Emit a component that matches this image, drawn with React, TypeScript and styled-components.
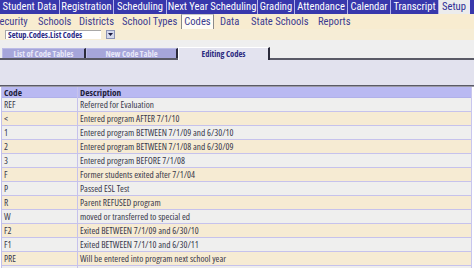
import React from "react";
import styled, { createGlobalStyle } from "styled-components";

const GlobalStyle = createGlobalStyle`
  html, body { margin: 0; padding: 0; background: #ffffff; overflow: hidden; }
  * { box-sizing: border-box; }
`;

const navFont = `"Roboto", "Liberation Sans", Arial, sans-serif`;
const smallFont = `"Open Sans", "DejaVu Sans", Verdana, sans-serif`;

const Page = styled.div`
  width: 474px;
  height: 268px;
  overflow: hidden;
  background: #ffffff;
`;

const NavBar = styled.div`
  display: flex;
  height: 14px;
  background: #3838ac;
  font-family: ${navFont};
  font-stretch: 75%;
  font-size: 10.6px;
  line-height: 14px;
`;

const NavItem = styled.div<{ $active?: boolean; $w: number }>`
  flex: 0 0 ${(p) => p.$w}px;
  text-align: center;
  white-space: nowrap;
  color: ${(p) => (p.$active ? "#2d2d96" : "#ffffff")};
  background: ${(p) => (p.$active ? "#ececec" : "transparent")};
  border-right: 1px solid ${(p) => (p.$active ? "#e8e8ff" : "#b4b4ec")};
`;

const SubNav = styled.div`
  display: flex;
  align-items: stretch;
  height: 15px;
  background: #f8ecd0;
  margin-left: -6px;
  font-family: ${navFont};
  font-stretch: 75%;
  font-size: 10.6px;
  line-height: 15px;
`;

const SubItem = styled.div<{ $active?: boolean; $w: number }>`
  flex: 0 0 ${(p) => p.$w}px;
  white-space: nowrap;
  color: #3c3c90;
  text-align: ${(p) => (p.$active ? "center" : "left")};
  margin-right: ${(p) => (p.$active ? "6px" : "0")};
  background: ${(p) => (p.$active ? "#fffcf4" : "transparent")};
  border-left: ${(p) => (p.$active ? "1px solid #8a8a8a" : "none")};
  border-right: ${(p) => (p.$active ? "1px solid #8a8a8a" : "none")};
  border-top: ${(p) => (p.$active ? "1px solid #c8c8c8" : "none")};
  line-height: ${(p) => (p.$active ? "14px" : "15px")};
`;

const CrumbRow = styled.div`
  display: flex;
  align-items: center;
  height: 11px;
  background: #f6edd6;
  padding-left: 5px;
  gap: 5px;
`;

const CrumbBox = styled.div`
  width: 96px;
  height: 9px;
  background: #ffffff;
  border-top: 1px solid #a8a8a8;
  border-left: 1px solid #a8a8a8;
  padding-left: 2px;
  font-family: ${smallFont};
  font-stretch: 75%;
  font-weight: bold;
  font-size: 8.4px;
  line-height: 8px;
  color: #2b2b86;
  white-space: nowrap;
`;

const DropButton = styled.div`
  width: 9px;
  height: 9px;
  background: #d4d8ec;
  border: 1px solid #8c94b6;
  display: flex;
  align-items: center;
  justify-content: center;
`;

const Spacer = styled.div`
  height: 8px;
  background: #efefef;
`;

const TabBar = styled.div`
  display: flex;
  align-items: flex-end;
  height: 12px;
  background: #efefef;
  padding-left: 2px;
  border-bottom: 2px solid #5a5a66;
`;

const Tab = styled.div<{ $active?: boolean; $w: number }>`
  width: ${(p) => p.$w}px;
  height: ${(p) => (p.$active ? "13px" : "10px")};
  margin-bottom: ${(p) => (p.$active ? "-2px" : "0")};
  background: ${(p) => (p.$active ? "#e3e3ef" : "#a6a6da")};
  color: ${(p) => (p.$active ? "#2b2b80" : "#e8e8f8")};
  border-top: 1px solid ${(p) => (p.$active ? "#ffffff" : "#bcbce6")};
  border-left: 1px solid ${(p) => (p.$active ? "#ffffff" : "#bcbce6")};
  border-right: 2px solid #2a2a3a;
  font-family: ${smallFont};
  font-stretch: 75%;
  font-weight: bold;
  font-size: 8.5px;
  line-height: ${(p) => (p.$active ? "11px" : "9px")};
  text-align: center;
  white-space: nowrap;
  position: relative;
  z-index: 1;
`;

const Panel = styled.div`
  height: 26px;
  background: #e2e2ee;
  border-bottom: 1px solid #5a5a66;
  box-shadow: 0 1px 0 #9a9aa6;
`;

const Table = styled.div`
  margin: 1px 2px 0 1px;
  border-left: 1px solid #c2c0ea;
  border-right: 1px solid #c8c6ee;
  font-family: ${smallFont};
  font-stretch: 75%;
  font-size: 9.3px;
`;

const Row = styled.div<{ $bg: string; $head?: boolean }>`
  display: grid;
  grid-template-columns: 76px 1fr;
  height: ${(p) => (p.$head ? "11px" : "14px")};
  background: ${(p) => p.$bg};
  border-bottom: 1px solid ${(p) => (p.$head ? "#b0b0ea" : "#c6c2ec")};
  color: ${(p) => (p.$head ? "#1e1e3a" : "#38384a")};
  font-weight: ${(p) => (p.$head ? "bold" : "normal")};
  line-height: ${(p) => (p.$head ? "11px" : "13px")};
`;

const Cell = styled.div<{ $first?: boolean }>`
  padding-left: 2px;
  border-right: ${(p) => (p.$first ? "1px solid #c6c2ec" : "none")};
  white-space: nowrap;
`;

const navItems: [string, number][] = [
  ["Student Data", 60],
  ["Registration", 54],
  ["Scheduling", 53],
  ["Next Year Scheduling", 91],
  ["Grading", 37],
  ["Attendance", 53],
  ["Calendar", 43],
  ["Transcript", 48],
];

const subItems: [string, number][] = [
  ["Security", 44],
  ["Schools", 41],
  ["Districts", 43],
  ["School Types", 59],
  ["Codes", 33],
  ["Data", 31],
  ["State Schools", 67],
  ["Reports", 50],
];

const codes: [string, string][] = [
  ["REF", "Referred for Evaluation"],
  ["<", "Entered program AFTER 7/1/10"],
  ["1", "Entered program BETWEEN 7/1/09 and 6/30/10"],
  ["2", "Entered program BETWEEN 7/1/08 and 6/30/09"],
  ["3", "Entered program BEFORE 7/1/08"],
  ["F", "Former students exited after 7/1/04"],
  ["P", "Passed ESL Test"],
  ["R", "Parent REFUSED program"],
  ["W", "moved or transferred to special ed"],
  ["F2", "Exited BETWEEN 7/1/09 and 6/30/10"],
  ["F1", "Exited BETWEEN 7/1/10 and 6/30/11"],
  ["PRE", "Will be entered into program next school year"],
  ["", ""],
];

export default function App() {
  return (
    <Page>
      <GlobalStyle />
      <NavBar>
        {navItems.map(([n, w]) => (
          <NavItem key={n} $w={w}>
            {n}
          </NavItem>
        ))}
        <NavItem $active $w={31}>
          Setup
        </NavItem>
      </NavBar>
      <SubNav>
        {subItems.map(([s, w]) => (
          <SubItem key={s} $w={w} $active={s === "Codes"}>
            {s}
          </SubItem>
        ))}
      </SubNav>
      <CrumbRow>
        <CrumbBox>Setup.Codes.List Codes</CrumbBox>
        <DropButton>
          <svg width="5" height="3" viewBox="0 0 5 3">
            <path d="M0 0 L5 0 L2.5 3 Z" fill="#1a1a40" />
          </svg>
        </DropButton>
      </CrumbRow>
      <Spacer />
      <TabBar>
        <Tab $w={84}>List of Code Tables</Tab>
        <Tab $w={92}>New Code Table</Tab>
        <Tab $w={92} $active>
          Editing Codes
        </Tab>
      </TabBar>
      <Panel />
      <Table>
        <Row $bg="#b9b9f2" $head>
          <Cell $first>Code</Cell>
          <Cell>Description</Cell>
        </Row>
        {codes.map(([c, d], i) => (
          <Row key={i} $bg={i % 2 === 0 ? "#efefee" : "#f6ebd3"}>
            <Cell $first>{c}</Cell>
            <Cell>{d}</Cell>
          </Row>
        ))}
      </Table>
    </Page>
  );
}
